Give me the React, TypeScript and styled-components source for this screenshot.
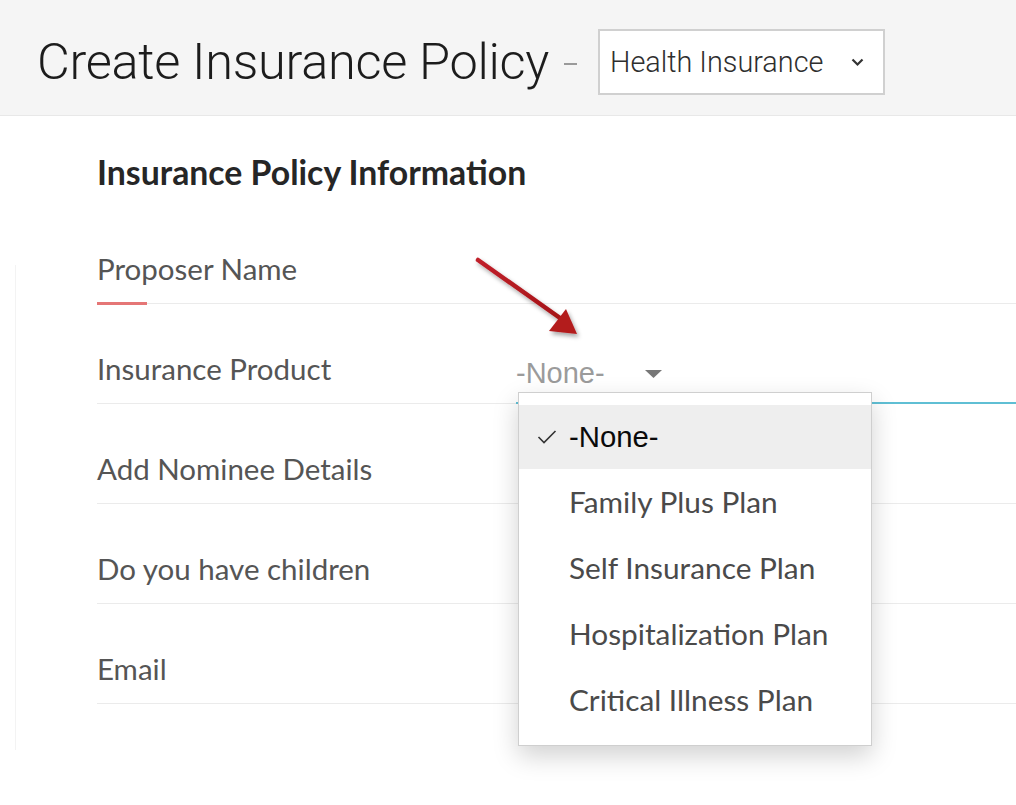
import React from "react";
import styled, { createGlobalStyle } from "styled-components";

const Global = createGlobalStyle`
  html, body { margin: 0; padding: 0; background: #ffffff; }
  body { font-family: "Lato", "Open Sans", sans-serif; }
  * { box-sizing: border-box; }
`;

const Page = styled.div`
  position: relative;
  width: 1016px;
  height: 805px;
  overflow: hidden;
  background: #fff;
`;

const Header = styled.header`
  height: 116px;
  background: #f5f5f5;
  border-bottom: 1px solid #e8e8e8;
  display: flex;
  align-items: center;
  padding-left: 37px;
  padding-top: 7px;
`;

const Title = styled.h1`
  margin: 0;
  font-family: "Roboto", "Liberation Sans", sans-serif;
  font-weight: 300;
  font-size: 50.5px;
  color: #1c1c1c;
  letter-spacing: -0.3px;
`;

const Dash = styled.span`
  display: block;
  width: 13px;
  height: 2px;
  margin: 6px 21px 0 15px;
  background: #9a9a9a;
`;

const TypeSelect = styled.div`
  width: 287px;
  height: 66px;
  margin-top: 2px;
  background: #fff;
  border: 2px solid #d0d0d0;
  display: flex;
  align-items: center;
  justify-content: space-between;
  padding: 0 19px 0 10px;
  font-family: "Roboto", sans-serif;
  font-weight: 300;
  font-size: 28.8px;
  color: #2e2e2e;
`;

const Content = styled.main`
  position: relative;
`;

const SectionTitle = styled.h2`
  margin: 0;
  height: 88px;
  padding: 37px 0 0 97px;
  font-family: "Lato", sans-serif;
  font-weight: 700;
  font-size: 33.8px;
  line-height: 38px;
  color: #262626;
`;

const Fields = styled.div`
  position: relative;
  padding-left: 97px;
  padding-bottom: 46px;
  &::before {
    content: "";
    position: absolute;
    left: 15px;
    top: 61px;
    bottom: 0;
    width: 1px;
    background: #f3f3f3;
  }
`;

const Row = styled.div`
  position: relative;
  height: 100px;
  display: grid;
  grid-template-columns: 419px 1fr;
  border-bottom: 1px solid #ebebeb;
`;

const Label = styled.div`
  display: flex;
  align-items: flex-end;
  padding-bottom: 17px;
  font-family: "Lato", sans-serif;
  font-size: 29.5px;
  line-height: 35px;
  color: #555;
`;

const Accent = styled.span`
  position: absolute;
  left: 0;
  bottom: -2px;
  width: 50px;
  height: 3px;
  background: #e57676;
`;

const ValueCell = styled.div<{ $focused?: boolean }>`
  position: relative;
  display: flex;
  align-items: flex-end;
  padding-bottom: 12px;
  margin-bottom: ${(p) => (p.$focused ? "-1px" : "0")};
  border-bottom: ${(p) => (p.$focused ? "2px solid #5fbfd4" : "none")};
`;

const PickValue = styled.div`
  display: flex;
  align-items: center;
  gap: 40px;
  font-family: "Liberation Sans", Arial, sans-serif;
  font-size: 29px;
  line-height: 33px;
  color: #9b9b9b;
`;

const Menu = styled.ul`
  position: absolute;
  top: 88px;
  left: 2px;
  width: 354px;
  margin: 0;
  padding: 12px 0 10px;
  list-style: none;
  background: #fff;
  border: 1px solid #cfcfcf;
  box-shadow: 0 10px 24px rgba(0, 0, 0, 0.18);
  z-index: 2;
`;

const Item = styled.li<{ $selected?: boolean }>`
  height: ${(p) => (p.$selected ? "64px" : "66px")};
  margin-bottom: ${(p) => (p.$selected ? "2px" : "0")};
  display: flex;
  align-items: center;
  padding-left: ${(p) => (p.$selected ? "18px" : "50px")};
  padding-bottom: ${(p) => (p.$selected ? "0" : "5px")};
  gap: 12px;
  background: ${(p) => (p.$selected ? "#eeeeee" : "transparent")};
  font-family: ${(p) =>
    p.$selected ? '"Liberation Sans", Arial, sans-serif' : '"Lato", sans-serif'};
  font-size: ${(p) => (p.$selected ? "29.3px" : "29.8px")};
  color: ${(p) => (p.$selected ? "#0a0a0a" : "#4a4a4a")};
`;

const Overlay = styled.svg`
  position: absolute;
  left: 0;
  top: 0;
  pointer-events: none;
  z-index: 3;
`;

const labels = [
  "Proposer Name",
  "Insurance Product",
  "Add Nominee Details",
  "Do you have children",
  "Email",
];

const plans = [
  "Family Plus Plan",
  "Self Insurance Plan",
  "Hospitalization Plan",
  "Critical Illness Plan",
];

export default function App() {
  return (
    <Page>
      <Global />
      <Header>
        <Title>Create Insurance Policy</Title>
        <Dash />
        <TypeSelect>
          <span>Health Insurance</span>
          <svg width="13" height="9" viewBox="0 0 13 9">
            <polyline
              points="1.5,1.5 6.5,6.5 11.5,1.5"
              fill="none"
              stroke="#333"
              strokeWidth="2.2"
            />
          </svg>
        </TypeSelect>
      </Header>
      <Content>
        <SectionTitle>Insurance Policy Information</SectionTitle>
        <Fields>
          {labels.map((l, i) => (
            <Row key={l}>
              <Label>{l}</Label>
              {i === 0 && <Accent />}
              {i === 1 ? (
                <ValueCell $focused>
                  <PickValue>
                    <span>-None-</span>
                    <svg width="17" height="10" viewBox="0 0 17 10">
                      <polygon points="0,1 17,1 8.5,9" fill="#777" />
                    </svg>
                  </PickValue>
                  <Menu>
                    <Item $selected>
                      <svg width="20" height="16" viewBox="0 0 20 16">
                        <polyline
                          points="1.5,8 7,13.5 18.5,2"
                          fill="none"
                          stroke="#333"
                          strokeWidth="1.6"
                        />
                      </svg>
                      <span>-None-</span>
                    </Item>
                    {plans.map((p) => (
                      <Item key={p}>{p}</Item>
                    ))}
                  </Menu>
                </ValueCell>
              ) : (
                <ValueCell />
              )}
            </Row>
          ))}
        </Fields>
      </Content>
      <Overlay width="1016" height="805" viewBox="0 0 1016 805">
        <defs>
          <filter id="sh" x="-20%" y="-20%" width="140%" height="140%">
            <feDropShadow dx="2" dy="3" stdDeviation="2" floodColor="#000" floodOpacity="0.35" />
          </filter>
          <linearGradient id="ar" x1="0" y1="0" x2="1" y2="1">
            <stop offset="0" stopColor="#c0202a" />
            <stop offset="1" stopColor="#a51518" />
          </linearGradient>
        </defs>
        <g filter="url(#sh)">
          <line
            x1="478"
            y1="260"
            x2="560"
            y2="318"
            stroke="url(#ar)"
            strokeWidth="4.5"
            strokeLinecap="round"
          />
          <polygon points="577,334 549,331 566,309" fill="#b31b1f" />
        </g>
      </Overlay>
    </Page>
  );
}
